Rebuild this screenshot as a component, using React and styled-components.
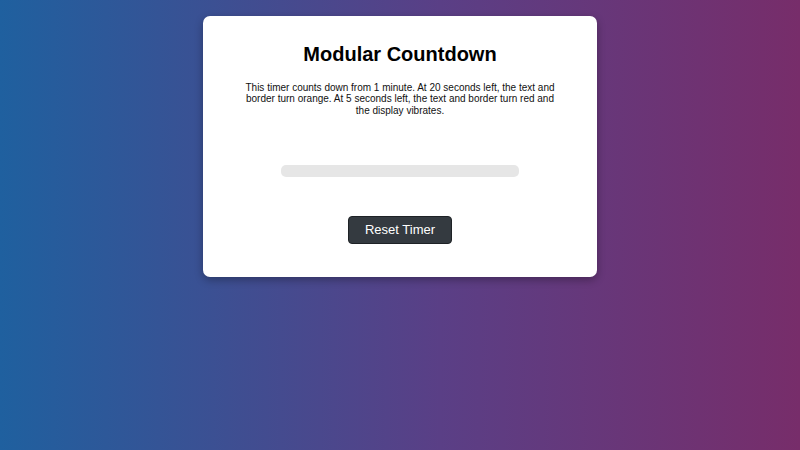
import React from "react";
import styled, { createGlobalStyle } from "styled-components";

const Global = createGlobalStyle`
  html, body { margin: 0; padding: 0; }
  body {
    width: 800px;
    height: 450px;
    font-family: "Liberation Sans", Arial, sans-serif;
    background: linear-gradient(to right, #1f609f, #5a3f86 55%, #772d6a);
    overflow: hidden;
  }
`;

const Page = styled.div`
  display: flex;
  justify-content: center;
  padding-top: 16px;
`;

const Card = styled.div`
  width: 394px;
  box-sizing: border-box;
  padding: 27px 40px 33px;
  background: #fff;
  border-radius: 7px;
  box-shadow: 0 3px 8px rgba(0, 0, 0, 0.3);
  display: flex;
  flex-direction: column;
  align-items: center;
  text-align: center;
`;

const Title = styled.h1`
  margin: 0;
  font-size: 20px;
  font-weight: 700;
  color: #000;
`;

const Description = styled.p`
  margin: 16px 0 0;
  font-size: 10px;
  line-height: 11.3px;
  color: #111;
`;

const Display = styled.div`
  height: 49px;
`;

const Track = styled.div`
  width: 238px;
  height: 12px;
  border-radius: 5px;
  background: #e6e6e6;
  overflow: hidden;
`;

const Fill = styled.div`
  height: 100%;
  background: #4caf50;
`;

const ResetButton = styled.button`
  margin-top: 39px;
  width: 104px;
  height: 28px;
  border: 1px solid #1e2226;
  border-radius: 4px;
  background: #343a40;
  color: #fff;
  font-family: "Liberation Sans", Arial, sans-serif;
  font-size: 13px;
  cursor: pointer;
`;

export default function App() {
  return (
    <>
      <Global />
      <Page>
        <Card>
          <Title>Modular Countdown</Title>
          <Description>
            This timer counts down from 1 minute. At 20 seconds left, the text and
            border turn orange. At 5 seconds left, the text and border turn red and
            the display vibrates.
          </Description>
          <Display />
          <Track>
            <Fill style={{ width: "0%" }} />
          </Track>
          <ResetButton>Reset Timer</ResetButton>
        </Card>
      </Page>
    </>
  );
}
